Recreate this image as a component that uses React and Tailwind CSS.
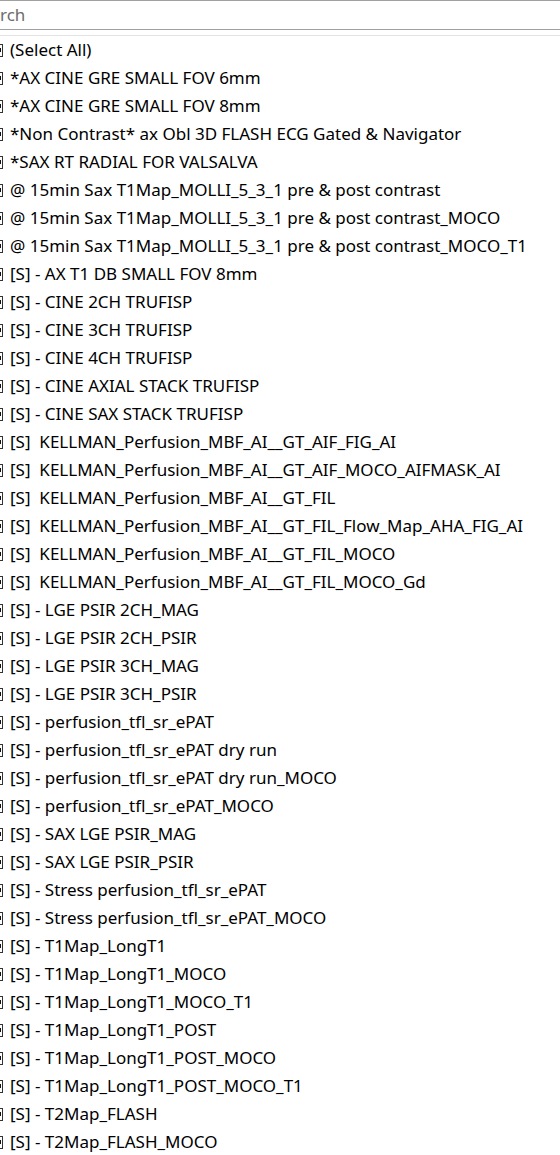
const items = [
  "(Select All)",
  "*AX CINE GRE SMALL FOV 6mm",
  "*AX CINE GRE SMALL FOV 8mm",
  "*Non Contrast* ax Obl 3D FLASH ECG Gated & Navigator",
  "*SAX RT RADIAL FOR VALSALVA",
  "@ 15min Sax T1Map_MOLLI_5_3_1 pre & post contrast",
  "@ 15min Sax T1Map_MOLLI_5_3_1 pre & post contrast_MOCO",
  "@ 15min Sax T1Map_MOLLI_5_3_1 pre & post contrast_MOCO_T1",
  "[S] - AX T1 DB SMALL FOV 8mm",
  "[S] - CINE 2CH TRUFISP",
  "[S] - CINE 3CH TRUFISP",
  "[S] - CINE 4CH TRUFISP",
  "[S] - CINE AXIAL STACK TRUFISP",
  "[S] - CINE SAX STACK TRUFISP",
  "[S]  KELLMAN_Perfusion_MBF_AI__GT_AIF_FIG_AI",
  "[S]  KELLMAN_Perfusion_MBF_AI__GT_AIF_MOCO_AIFMASK_AI",
  "[S]  KELLMAN_Perfusion_MBF_AI__GT_FIL",
  "[S]  KELLMAN_Perfusion_MBF_AI__GT_FIL_Flow_Map_AHA_FIG_AI",
  "[S]  KELLMAN_Perfusion_MBF_AI__GT_FIL_MOCO",
  "[S]  KELLMAN_Perfusion_MBF_AI__GT_FIL_MOCO_Gd",
  "[S] - LGE PSIR 2CH_MAG",
  "[S] - LGE PSIR 2CH_PSIR",
  "[S] - LGE PSIR 3CH_MAG",
  "[S] - LGE PSIR 3CH_PSIR",
  "[S] - perfusion_tfl_sr_ePAT",
  "[S] - perfusion_tfl_sr_ePAT dry run",
  "[S] - perfusion_tfl_sr_ePAT dry run_MOCO",
  "[S] - perfusion_tfl_sr_ePAT_MOCO",
  "[S] - SAX LGE PSIR_MAG",
  "[S] - SAX LGE PSIR_PSIR",
  "[S] - Stress perfusion_tfl_sr_ePAT",
  "[S] - Stress perfusion_tfl_sr_ePAT_MOCO",
  "[S] - T1Map_LongT1",
  "[S] - T1Map_LongT1_MOCO",
  "[S] - T1Map_LongT1_MOCO_T1",
  "[S] - T1Map_LongT1_POST",
  "[S] - T1Map_LongT1_POST_MOCO",
  "[S] - T1Map_LongT1_POST_MOCO_T1",
  "[S] - T2Map_FLASH",
  "[S] - T2Map_FLASH_MOCO",
];

function Check() {
  // only the right edge of the box shows, the rest is scrolled off to the left
  return (
    <span className="ml-[-10px] mr-[7px] flex h-[13px] w-[13px] shrink-0 items-center justify-end border border-[#333] pr-[1px]">
      <span className="h-[4px] w-[2px] bg-[#111]" />
    </span>
  );
}

export default function App() {
  return (
    <div className="h-[1155px] w-[560px] overflow-hidden bg-white font-['Noto_Sans',sans-serif] text-black">
      <div className="flex h-[30px] items-center border-y border-[#a0a0a0] text-[17px] text-[#6d6d6d]">
        rch
      </div>
      <div className="mt-[5px] border-t border-[#e3e3e3]">
        {items.map((label, i) => (
          <div key={i} className="flex h-[28px] items-center whitespace-pre text-[17px]">
            <Check />
            {label}
          </div>
        ))}
      </div>
    </div>
  );
}
